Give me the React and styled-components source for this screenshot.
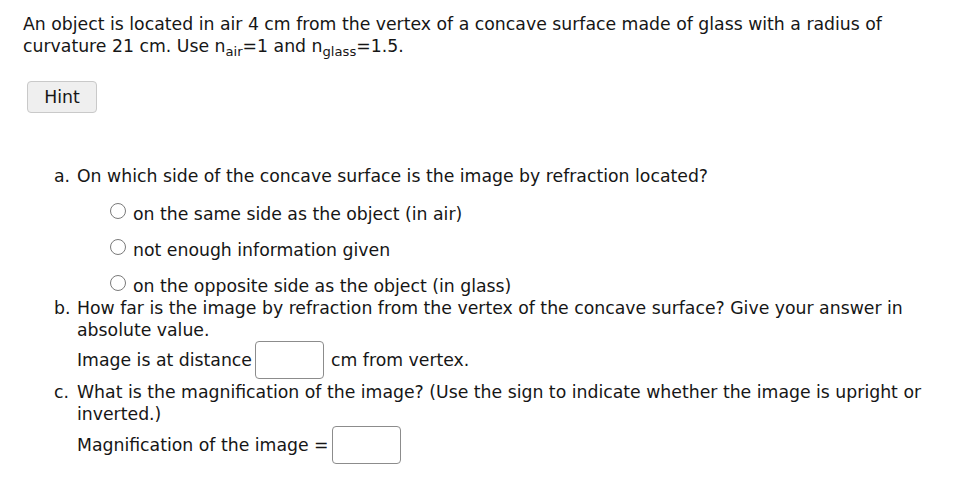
import React from "react";
import styled, { createGlobalStyle } from "styled-components";

const GlobalStyle = createGlobalStyle`
  html, body { margin: 0; padding: 0; background: #ffffff; }
  body {
    font-family: "DejaVu Sans", Verdana, sans-serif;
    font-size: 17.3px;
    line-height: 22px;
    color: #161616;
  }
`;

const Page = styled.main`
  padding: 13px 23px 0 23px;
`;

const Prompt = styled.p`
  margin: 0;
`;

const Sub = styled.sub`
  font-size: 0.76em;
  line-height: 0;
  vertical-align: -0.32em;
`;

const HintButton = styled.button`
  display: block;
  margin: 24px 0 0 4px;
  width: 70px;
  height: 32px;
  padding: 0;
  font: inherit;
  color: #161616;
  background: #efefef;
  border: 1px solid #c9c9c9;
  border-radius: 4px;
`;

const Parts = styled.ol`
  list-style: none;
  margin: 52px 0 0 31px;
  padding: 0;
`;

const Part = styled.li`
  display: grid;
  grid-template-columns: 23px 1fr;
  margin-top: ${(p) => p.$gap || 0}px;
`;

const Marker = styled.span``;

const Body = styled.div`
  min-width: 0;
`;

const Question = styled.div``;

const Options = styled.div`
  display: flex;
  flex-direction: column;
  gap: 14px;
  margin: 16px 0 0 33px;
`;

const Option = styled.label`
  display: flex;
  align-items: flex-start;
  gap: 7px;
  height: 22px;
`;

const Radio = styled.input.attrs({ type: "radio" })`
  appearance: none;
  margin: 0;
  width: 16px;
  height: 16px;
  border: 1px solid #7a7a7a;
  border-radius: 50%;
  background: #fff;
  flex: none;
`;

const AnswerRow = styled.div`
  display: flex;
  align-items: center;
  height: 38px;
  margin-top: ${(p) => p.$gap || 0}px;
`;

const AnswerBox = styled.input.attrs({ type: "text" })`
  box-sizing: border-box;
  width: 69px;
  height: 38px;
  margin: 0 ${(p) => p.$after}px 0 ${(p) => p.$before}px;
  border: 1px solid #8c8c8c;
  border-radius: 4px;
  background: #fff;
  font: inherit;
`;

export default function App() {
  return (
    <Page>
      <GlobalStyle />
      <Prompt>
        An object is located in air 4 cm from the vertex of a concave surface made of glass with a
        radius of curvature 21 cm. Use n<Sub>air</Sub>=1 and n<Sub>glass</Sub>=1.5.
      </Prompt>
      <HintButton>Hint</HintButton>
      <Parts>
        <Part>
          <Marker>a.</Marker>
          <Body>
            <Question>On which side of the concave surface is the image by refraction located?</Question>
            <Options>
              <Option>
                <Radio name="side" />
                <span>on the same side as the object (in air)</span>
              </Option>
              <Option>
                <Radio name="side" />
                <span>not enough information given</span>
              </Option>
              <Option>
                <Radio name="side" />
                <span>on the opposite side as the object (in glass)</span>
              </Option>
            </Options>
          </Body>
        </Part>
        <Part>
          <Marker>b.</Marker>
          <Body>
            <Question>
              How far is the image by refraction from the vertex of the concave surface? Give your
              answer in absolute value.
            </Question>
            <AnswerRow>
              <span>Image is at distance</span>
              <AnswerBox $before={3} $after={7} />
              <span>cm from vertex.</span>
            </AnswerRow>
          </Body>
        </Part>
        <Part $gap={2}>
          <Marker>c.</Marker>
          <Body>
            <Question>
              What is the magnification of the image? (Use the sign to indicate whether the image is
              upright or inverted.)
            </Question>
            <AnswerRow $gap={1}>
              <span>Magnification of the image =</span>
              <AnswerBox $before={3} $after={0} />
            </AnswerRow>
          </Body>
        </Part>
      </Parts>
    </Page>
  );
}
